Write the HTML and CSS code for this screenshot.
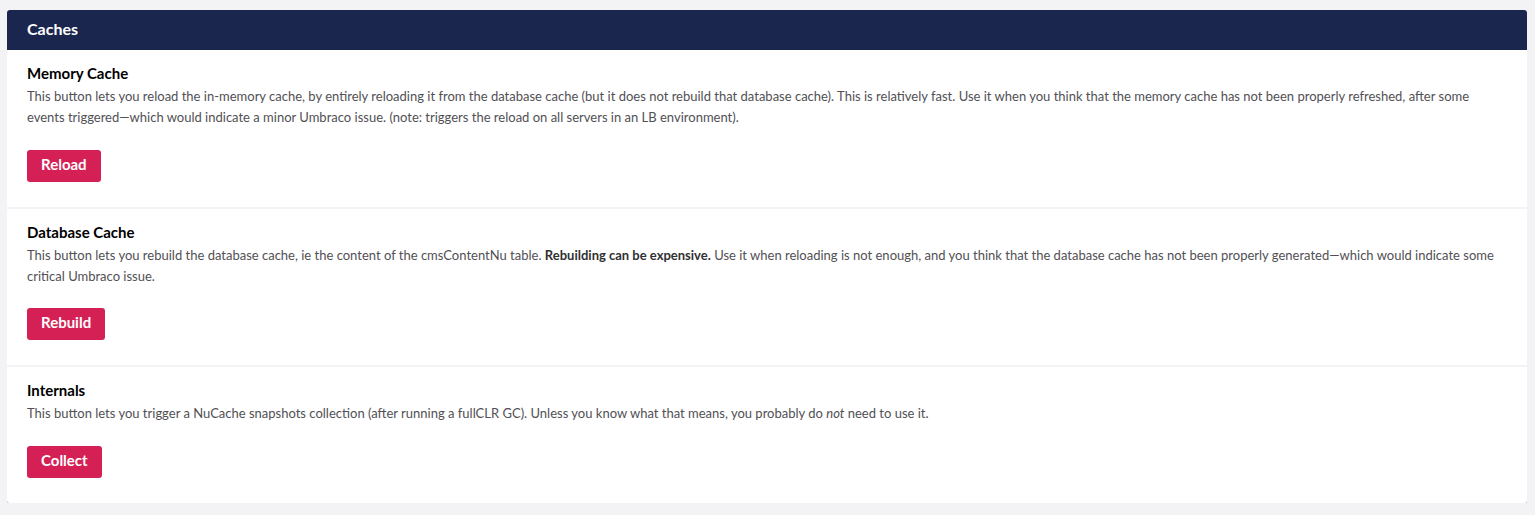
FILE: index.html
```html
<!DOCTYPE html>
<html lang="en">
<head>
    <meta charset="UTF-8">
    <title>Caches</title>
    <link rel="stylesheet" href="styles.css">
</head>
<body>
    <div class="box">
        <div class="box-header">Caches</div>

        <div class="box-section">
            <h4>Memory Cache</h4>
            <p>This button lets you reload the in-memory cache, by entirely reloading it from the database cache (but it does not rebuild that database cache). This is relatively fast. Use it when you think that the memory cache has not been properly refreshed, after some events triggered&mdash;which would indicate a minor Umbraco issue. (note: triggers the reload on all servers in an LB environment).</p>
            <button class="btn">Reload</button>
        </div>

        <div class="box-section">
            <h4>Database Cache</h4>
            <p class="tight">This button lets you rebuild the database cache, ie the content of the cmsContentNu table. <strong>Rebuilding can be expensive.</strong> Use it when reloading is not enough, and you think that the database cache has not been properly generated&mdash;which would indicate some critical Umbraco issue.</p>
            <button class="btn">Rebuild</button>
        </div>

        <div class="box-section">
            <h4>Internals</h4>
            <p>This button lets you trigger a NuCache snapshots collection (after running a fullCLR GC). Unless you know what that means, you probably do <em>not</em> need to use it.</p>
            <button class="btn">Collect</button>
        </div>
    </div>
</body>
</html>
```

FILE: styles.css
```css
body {
    margin: 10px 8px 0 7px;
    background: #f3f3f5;
    font-family: Lato, "Open Sans", sans-serif;
    font-size: 13px;
    color: #515054;
}
.box {
    background: #fff;
    border-radius: 3px;
    box-shadow: 0 1px 1px rgba(0, 0, 0, 0.25);
    overflow: hidden;
}
.box-header {
    background: #1b264f;
    color: #fff;
    font-weight: bold;
    font-size: 16px;
    height: 40px;
    line-height: 37px;
    padding: 0 20px;
}
.box-section {
    padding: 13px 20px 25px;
    border-top: 2px solid #f3f3f5;
}
.box-header + .box-section {
    border-top: none;
}
.box-section h4 {
    margin: 0 0 3px;
    font-size: 15px;
    line-height: 20px;
    color: #000;
    font-weight: bold;
}
.box-section p {
    margin: 0 0 22px;
    line-height: 21px;
}
.box-section p.tight {
    margin-bottom: 21px;
}
.box-section strong {
    color: #303033;
}
.btn {
    display: block;
    box-sizing: border-box;
    background: #d42054;
    color: #fff;
    border: none;
    border-radius: 3px;
    font-family: inherit;
    font-weight: bold;
    font-size: 15px;
    height: 32px;
    padding: 0 14px 4px;
    cursor: pointer;
}
```
